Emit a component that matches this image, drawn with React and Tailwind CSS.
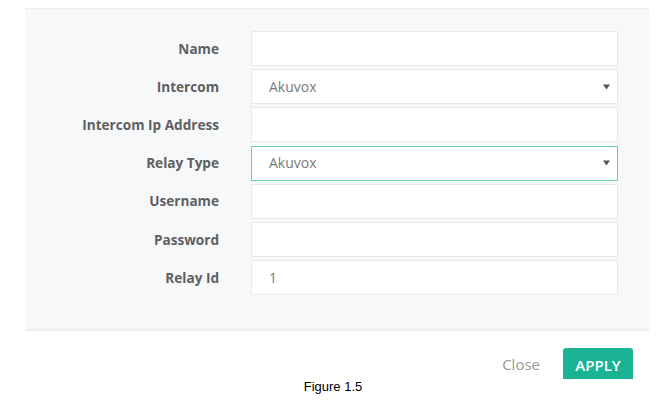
import React from "react";

const rows = [
  { label: "Name", value: "" },
  { label: "Intercom", value: "Akuvox", select: true },
  { label: "Intercom Ip Address", value: "" },
  { label: "Relay Type", value: "Akuvox", select: true, focus: true },
  { label: "Username", value: "" },
  { label: "Password", value: "" },
  { label: "Relay Id", value: "1" },
];

function Caret() {
  return (
    <svg width="7" height="6" viewBox="0 0 7 6" className="shrink-0">
      <path d="M0 0.5 H7 L3.5 5.5 Z" fill="#555" />
    </svg>
  );
}

export default function App() {
  return (
    <div className="w-[666px] h-[404px] bg-white overflow-hidden" style={{ fontFamily: '"Open Sans", sans-serif' }}>
      <div className="h-[8px]" />
      <div className="ml-[25px] w-[624px]">
        <div className="bg-[#f7f8fa] border-t-[1px] border-b-[2px] border-[#eceef0] pt-[22px] pb-[34px]">
          <div className="flex flex-col gap-[3.2px]">
            {rows.map((r) => (
              <div key={r.label} className="flex items-center h-[35px]">
                <div className="w-[194px] text-right text-[13.6px] font-bold text-[#5e6062] leading-none">
                  {r.label}
                </div>
                <div
                  className={
                    r.focus
                      ? "ml-[32px] w-[367px] h-[35px] bg-white flex items-center pl-[17px] pr-[7px] text-[14px] text-[#7a7a7a] border border-solid border-[color:#6ccfb0]"
                      : "ml-[32px] w-[367px] h-[35px] bg-white flex items-center pl-[17px] pr-[7px] text-[14px] text-[#7a7a7a] border border-solid border-[color:#e8e9ea]"
                  }
                >
                  <span className="flex-1 leading-none">{r.value}</span>
                  {r.select && <Caret />}
                </div>
              </div>
            ))}
          </div>
        </div>
        <div className="h-[48px] overflow-hidden bg-white flex justify-end items-start pt-[17px] pr-[16px]">
          <div className="flex items-start">
            <span className="text-[15px] text-[#999] mr-[23px] mt-[5px] leading-[22px]">Close</span>
            <div className="w-[70px] h-[34px] rounded-[3px] bg-[#1ab394] text-white text-[15px] font-semibold flex items-center justify-center">
              APPLY
            </div>
          </div>
        </div>
      </div>
      <div className="text-center text-[13px] text-black leading-[16px]" style={{ fontFamily: '"Liberation Sans", sans-serif' }}>
        Figure 1.5
      </div>
    </div>
  );
}
